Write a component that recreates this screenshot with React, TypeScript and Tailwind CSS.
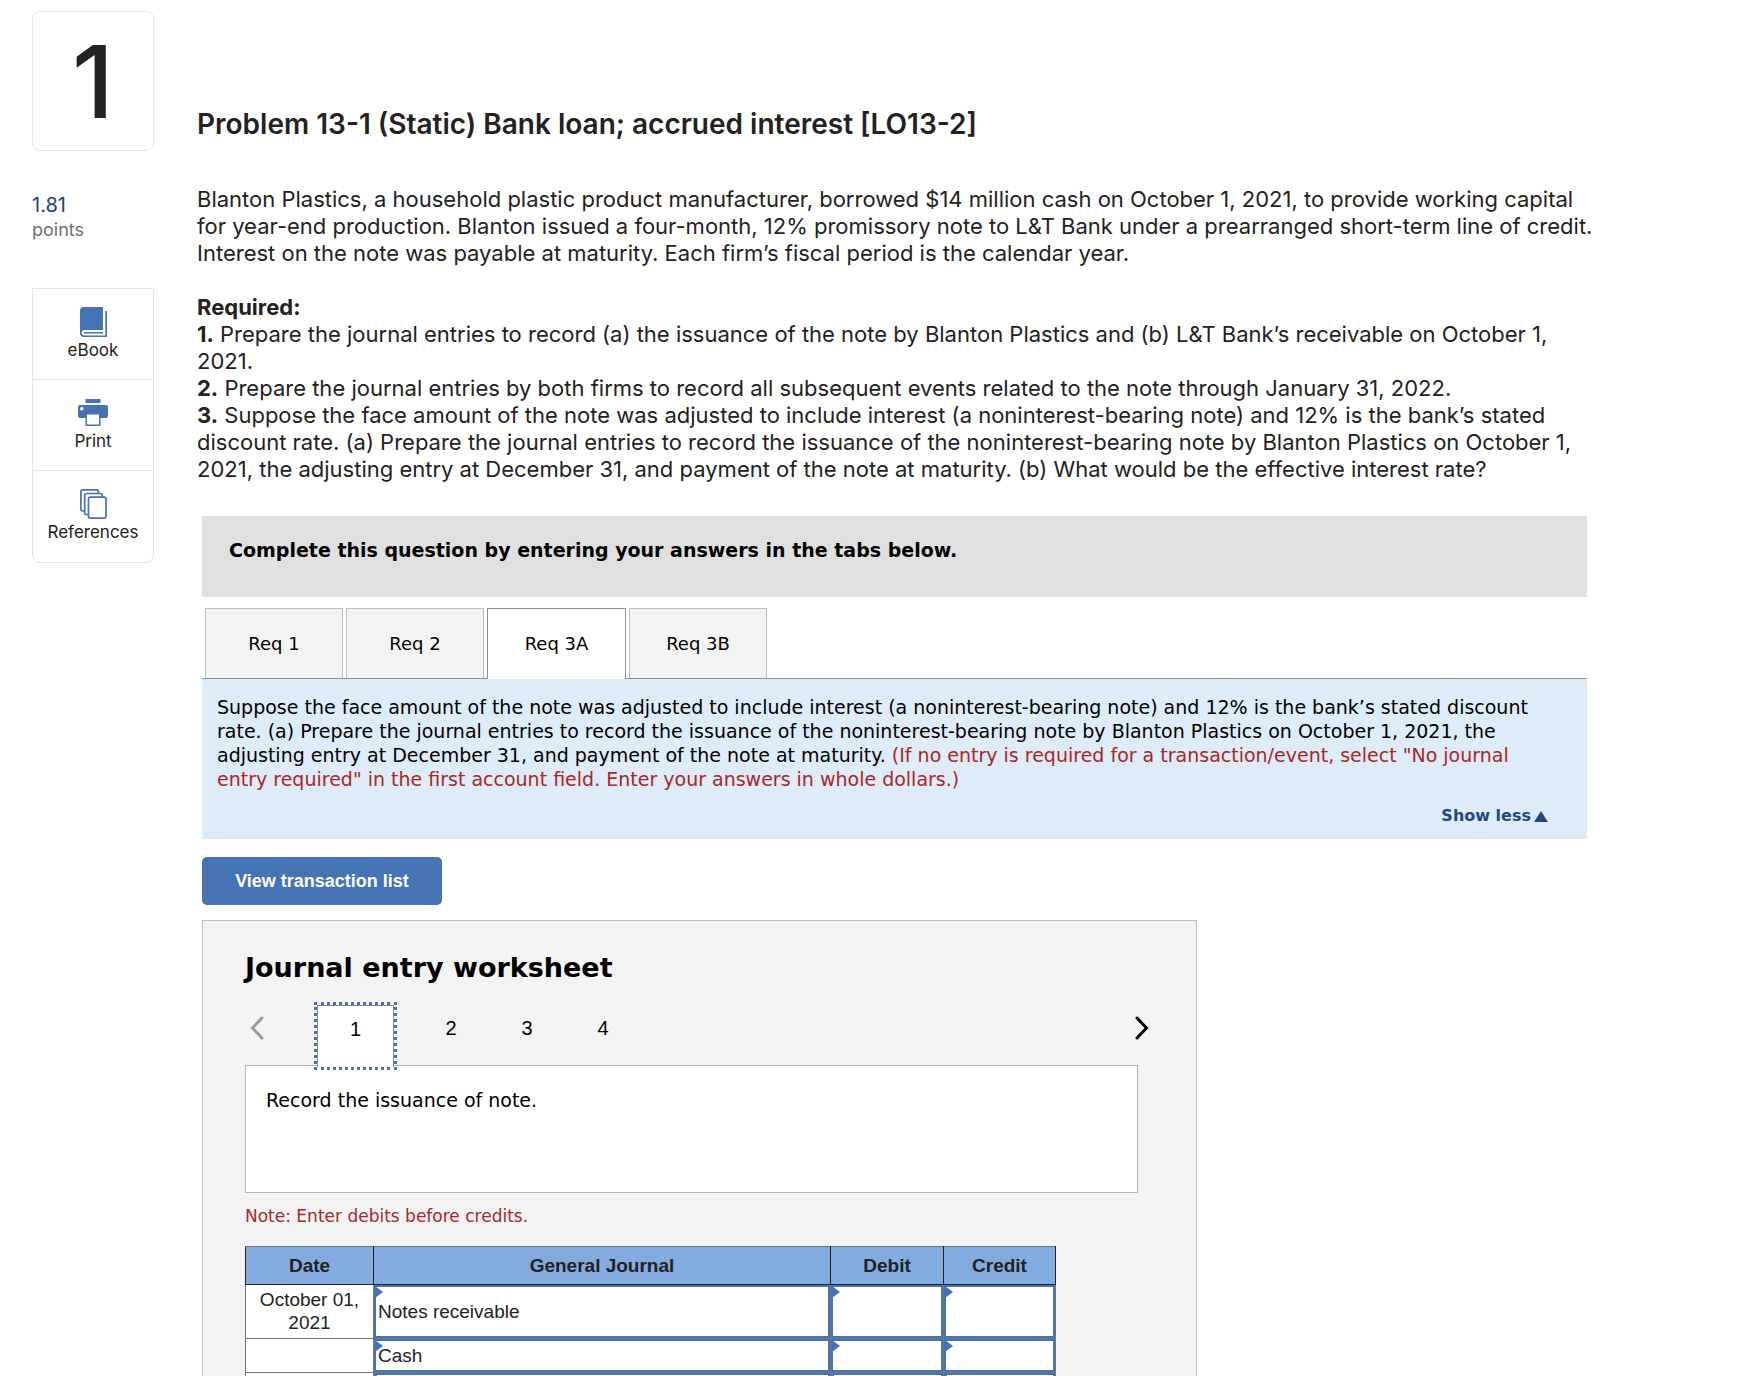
import { ReactNode } from 'react';

export default function App() {
  return (
    <div className="flex h-screen items-start overflow-hidden bg-white font-[Inter,sans-serif] text-[#222]">
      <Sidebar />
      <main className="min-w-0 flex-1 pt-[107px] pr-[147px] pl-[43px]">
        <Problem />
        <div className="mt-[33px] mr-2 ml-[5px] font-['DejaVu_Sans',sans-serif] text-black">
          <div className="bg-[#e0e0e0] px-[27px] pt-[22px] pb-[35px] text-[19px] leading-[24px] font-bold">
            Complete this question by entering your answers in the tabs below.
          </div>
          <ReqTabs />
          <section className="bg-[#deebf8] px-[15px] pt-[16px] pb-[11px]">
            <p className="text-[19px] leading-[24px]">
              Suppose the face amount of the note was adjusted to include interest (a noninterest-bearing note) and 12% is the bank’s stated discount
              <br />
              rate. (a) Prepare the journal entries to record the issuance of the noninterest-bearing note by Blanton Plastics on October 1, 2021, the
              <br />
              adjusting entry at December 31, and payment of the note at maturity.{' '}
              <span className="text-[#a82824]">
                (If no entry is required for a transaction/event, select "No journal
                <br />
                entry required" in the first account field. Enter your answers in whole dollars.)
              </span>
            </p>
            <div className="mt-[13px] flex justify-end pr-6">
              <button type="button" className="flex items-center gap-[3px] text-[16px] leading-[24px] font-bold text-[#25477f]">
                Show less
                <svg viewBox="0 0 14 11" className="h-[11px] w-[14px]" fill="currentColor" aria-hidden="true">
                  <path d="M7 0 14 11H0z" />
                </svg>
              </button>
            </div>
          </section>
          <button
            type="button"
            className="mt-[18px] block h-[48px] w-[240px] rounded-[5px] bg-[#4673b3] font-['Liberation_Sans',sans-serif] text-[18px] font-bold text-white"
          >
            View transaction list
          </button>
          <Worksheet />
        </div>
      </main>
    </div>
  );
}

function Sidebar() {
  return (
    <aside className="w-[154px] shrink-0 pt-[11px] pl-[32px]">
      <div className="flex h-[140px] items-center justify-center rounded-[8px] border border-[#e8e8e8] text-[101px] leading-none font-medium">1</div>
      <div className="mt-[42px] text-[20px] leading-[24px] text-[#204080]">1.81</div>
      <div className="text-[18px] leading-[26px] text-[#707070]">points</div>
      <nav className="mt-[45px] rounded-b-[8px] border border-[#e6e6e6]">
        {resources.map((item) => (
          <button
            key={item.label}
            type="button"
            className="flex h-[91px] w-full flex-col items-center border-b border-[#e6e6e6] pt-[16px] text-[17px] leading-[24px] last:border-0"
          >
            <span className="flex h-[33px] items-center">{item.icon}</span>
            {item.label}
          </button>
        ))}
      </nav>
    </aside>
  );
}

function Problem() {
  return (
    <>
      <h1 className="text-[28px] leading-[34px] font-semibold">Problem 13-1 (Static) Bank loan; accrued interest [LO13-2]</h1>
      <div className="mt-[45px] text-[22px] leading-[27px] whitespace-nowrap">
        <p>
          Blanton Plastics, a household plastic product manufacturer, borrowed $14 million cash on October 1, 2021, to provide working capital
          <br />
          for year-end production. Blanton issued a four-month, 12% promissory note to L&amp;T Bank under a prearranged short-term line of credit.
          <br />
          Interest on the note was payable at maturity. Each firm’s fiscal period is the calendar year.
        </p>
        <p className="mt-[27px] font-bold">Required:</p>
        <p>
          <b>1.</b> Prepare the journal entries to record (a) the issuance of the note by Blanton Plastics and (b) L&amp;T Bank’s receivable on October 1,
          <br />
          2021.
        </p>
        <p>
          <b>2.</b> Prepare the journal entries by both firms to record all subsequent events related to the note through January 31, 2022.
        </p>
        <p>
          <b>3.</b> Suppose the face amount of the note was adjusted to include interest (a noninterest-bearing note) and 12% is the bank’s stated
          <br />
          discount rate. (a) Prepare the journal entries to record the issuance of the noninterest-bearing note by Blanton Plastics on October 1,
          <br />
          2021, the adjusting entry at December 31, and payment of the note at maturity. (b) What would be the effective interest rate?
        </p>
      </div>
    </>
  );
}

function ReqTabs() {
  return (
    <div className="mt-[11px] flex gap-[3px] border-b border-[#8f8f8f] pl-[3px]" role="tablist">
      {reqTabs.map((label) => {
        const active = label === 'Req 3A';
        return (
          <button
            key={label}
            type="button"
            role="tab"
            aria-selected={active}
            className={
              active
                ? '-mb-px h-[71px] w-[139px] border border-b-0 border-[#8f8f8f] bg-white pb-px text-[18px]'
                : 'h-[70px] w-[138px] border border-b-0 border-[#c0c0c0] bg-[#f3f3f3] text-[18px]'
            }
          >
            {label}
          </button>
        );
      })}
    </div>
  );
}

function Worksheet() {
  return (
    <section className="mt-[15px] max-w-[995px] border border-[#bebebe] bg-[#f3f3f3] pt-[30px] pr-[58px] pb-10 pl-[42px]">
      <h2 className="text-[27px] leading-[34px] font-bold">Journal entry worksheet</h2>
      <div className="-mr-[11px] mt-[20px] flex h-[60px] font-['Liberation_Sans',sans-serif] text-[20px]">
        <button type="button" aria-label="Previous entry" className="flex h-[46px] w-[72px] items-center pl-[5px] text-[#999]">
          <svg viewBox="0 0 14 24" className="h-[24px] w-[14px]" fill="none" stroke="currentColor" strokeWidth="3" strokeLinecap="round" aria-hidden="true">
            <path d="M12 2 2.500 12 12 22" />
          </svg>
        </button>
        <button
          type="button"
          aria-current="true"
          className="relative z-10 h-[62px] w-[77px] border border-b-0 border-[#888] bg-white pb-[16px] outline-[3px] outline-[#4673b3] outline-dotted"
        >
          1
        </button>
        <div className="ml-[19px] flex">
          {['2', '3', '4'].map((n) => (
            <button key={n} type="button" className="h-[46px] w-[76px]">
              {n}
            </button>
          ))}
        </div>
        <button type="button" aria-label="Next entry" className="ml-auto flex h-[46px] items-center text-black">
          <svg viewBox="0 0 14 24" className="h-[24px] w-[14px]" fill="none" stroke="currentColor" strokeWidth="3" strokeLinecap="round" aria-hidden="true">
            <path d="M2 2l9.500 10L2 22" />
          </svg>
        </button>
      </div>
      <div className="h-[128px] border border-[#b5b5b5] bg-white px-[20px] pt-[22px] text-[19px] leading-[24px]">Record the issuance of note.</div>
      <p className="mt-[11px] text-[17px] leading-[24px] text-[#a82824]">Note: Enter debits before credits.</p>
      <table className="mt-[18px] w-[811px] table-fixed border-collapse border border-[#777] bg-white font-['Liberation_Sans',sans-serif] text-[19px] leading-[23px] text-[#222]">
        <colgroup>
          <col className="w-[128px]" />
          <col />
          <col className="w-[113px]" />
          <col className="w-[112px]" />
        </colgroup>
        <thead>
          <tr className="h-[38px] bg-[#84abdf]">
            <HeadCell>Date</HeadCell>
            <HeadCell>General Journal</HeadCell>
            <HeadCell>Debit</HeadCell>
            <HeadCell>Credit</HeadCell>
          </tr>
        </thead>
        <tbody>
          {journalRows.map((row, index) => (
            <tr key={index} className={row.date ? 'h-[54px]' : 'h-[34px]'}>
              <td className="border border-[#777] px-1 pb-[2px] text-center">{row.date}</td>
              <EntryCell label={`Account, line ${index + 1}`} value={row.account} />
              <EntryCell label={`Debit, line ${index + 1}`} value="" />
              <EntryCell label={`Credit, line ${index + 1}`} value="" />
            </tr>
          ))}
        </tbody>
      </table>
    </section>
  );
}

function HeadCell({ children }: { children: ReactNode }) {
  return <th className="border border-[#222] border-t-[#777] p-0 font-bold">{children}</th>;
}

function EntryCell({ label, value }: { label: string; value: string }) {
  return (
    <td className="relative h-px border border-[#777] p-0">
      <input
        type="text"
        aria-label={label}
        defaultValue={value}
        className="block size-full min-w-0 border-2 border-[#4673b3] bg-white pl-[2px] outline-none"
      />
      <svg viewBox="0 0 8 12" className="absolute top-[1px] left-[1px] h-[12px] w-[8px]" fill="#4673b3" aria-hidden="true">
        <path d="M0 0 8 6 0 12z" />
      </svg>
    </td>
  );
}

const reqTabs = ['Req 1', 'Req 2', 'Req 3A', 'Req 3B'];

const resources = [
  {
    label: 'eBook',
    icon: (
      <svg viewBox="0 0 27 30" className="h-[30px] w-[27px]" aria-hidden="true">
        <path
          fill="#4673b3"
          d="M3.500 0H23V23H4.500a2.200 2.200 0 0 0 0 5.500H25.300V4H27V30H4a4 4 0 0 1-4-4V3.500a3.500 3.500 0 0 1 3.500-3.500z"
        />
        <path fill="#4673b3" d="M4 25H23V26.500H4z" />
      </svg>
    )
  },
  {
    label: 'Print',
    icon: (
      <svg viewBox="0 0 30 27" className="h-[27px] w-[30px]" aria-hidden="true">
        <path fill="#4673b3" d="M7.500 0h15v4h-15z" />
        <path
          fill="#4673b3"
          fillRule="evenodd"
          d="M2 6H28a2 2 0 0 1 2 2v9a2 2 0 0 1-2 2H22.500V27H7.500V19H2a2 2 0 0 1-2-2V8a2 2 0 0 1 2-2zM9 15.500V25.500H21V15.500zM3.800 8a1.800 1.800 0 1 0 0 3.600 1.800 1.800 0 0 0 0-3.600z"
        />
      </svg>
    )
  },
  {
    label: 'References',
    icon: (
      <svg viewBox="0 0 27 30" className="h-[30px] w-[27px]" fill="#fff" stroke="#4673b3" strokeWidth="1.7" aria-hidden="true">
        <rect x="0.900" y="0.900" width="17.500" height="21" rx="1.800" />
        <rect x="4.700" y="4.500" width="17.500" height="21" rx="1.800" />
        <rect x="8.500" y="8.100" width="17.500" height="21" rx="1.800" />
      </svg>
    )
  }
];

const journalRows = [
  { date: 'October 01, 2021', account: 'Notes receivable' },
  { date: '', account: 'Cash' },
  { date: '', account: '' }
];
